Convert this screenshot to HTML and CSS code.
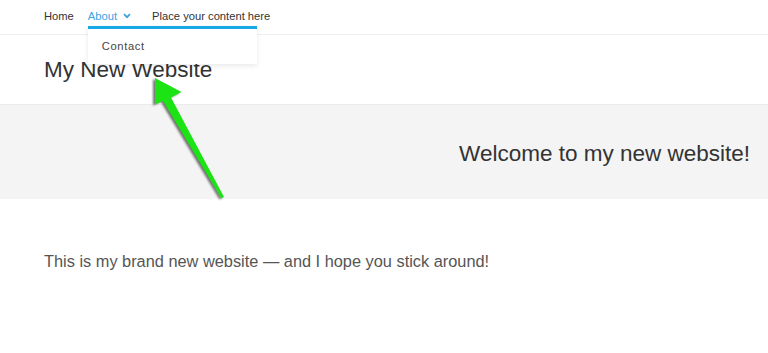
FILE: index.html
```html
<!DOCTYPE html>
<html>
<head>
<meta charset="utf-8">
<link rel="stylesheet" href="styles.css">
</head>
<body>
<nav class="topnav">
  <ul class="menu">
    <li class="item"><a class="link">Home</a></li>
    <li class="item item-active"><a class="link link-active">About <svg class="chev" width="8" height="6" viewBox="0 0 8 6"><path d="M1 1.2 L4 4.2 L7 1.2" fill="none" stroke="#3aa3df" stroke-width="1.8"/></svg></a>
      <div class="dropdown"><a class="dd-link">Contact</a></div>
    </li>
    <li class="item"><a class="link">Place your content here</a></li>
  </ul>
</nav>
<header class="site-header">
  <h1 class="site-title">My New Website</h1>
</header>
<section class="hero">
  <h2 class="hero-title">Welcome to my new website!</h2>
</section>
<main class="content">
  <p class="lead">This is my brand new website — and I hope you stick around!</p>
</main>
<svg class="annotation" width="768" height="353" viewBox="0 0 768 353">
  <polygon points="155,78 181.5,92 171,97.5 224,197 221.5,198.5 163,101 155,104.5" fill="#1be314"/>
</svg>
</body>
</html>
```

FILE: styles.css
```css
html, body {
  margin: 0;
  padding: 0;
  background: #fff;
  font-family: "Liberation Sans", Arial, sans-serif;
}
body {
  position: relative;
  width: 768px;
  height: 353px;
  overflow: hidden;
}
.topnav {
  height: 34px;
  border-bottom: 1px solid #eeeeee;
  box-sizing: content-box;
}
.menu {
  list-style: none;
  margin: 0;
  padding: 0 0 0 44px;
  display: flex;
  height: 34px;
}
.item {
  position: relative;
  height: 34px;
}
.item + .item { margin-left: 14px; }
.item-active + .item { margin-left: 21px; }
.link {
  display: flex;
  align-items: center;
  height: 32px;
  font-size: 11.2px;
  color: #333;
}
.link-active { color: #3aa3df; }
.chev { margin-left: 6px; }
.dropdown {
  position: absolute;
  top: 26px;
  left: 0;
  width: 169px;
  height: 38px;
  box-sizing: border-box;
  border-top: 3px solid #17a9e6;
  background: #fff;
  box-shadow: 0 2px 5px rgba(0,0,0,0.09);
  z-index: 2;
  display: flex;
  align-items: center;
  padding-left: 14px;
}
.dd-link {
  font-size: 11.2px;
  letter-spacing: 0.6px;
  color: #444;
  margin-top: -1px;
}
.site-header {
  height: 69px;
  box-sizing: border-box;
  padding: 22px 0 0 44px;
}
.site-title {
  margin: 0;
  font-weight: normal;
  font-size: 22.5px;
  line-height: 26px;
  color: #333;
}
.hero {
  height: 95px;
  box-sizing: border-box;
  background: #f4f4f4;
  border-top: 1px solid #ebebeb;
  display: flex;
  align-items: center;
  justify-content: flex-end;
  padding: 3px 18px 0 0;
}
.hero-title {
  margin: 0;
  font-weight: normal;
  font-size: 22.5px;
  line-height: 26px;
  color: #333;
}
.content {
  padding: 52px 0 0 44px;
}
.lead {
  margin: 0;
  font-size: 16.35px;
  line-height: 20px;
  color: #555;
}
.annotation {
  position: absolute;
  left: 0;
  top: 0;
  pointer-events: none;
  z-index: 5;
  filter: drop-shadow(-1.5px 1px 1px rgba(0,0,0,0.55));
}
```
